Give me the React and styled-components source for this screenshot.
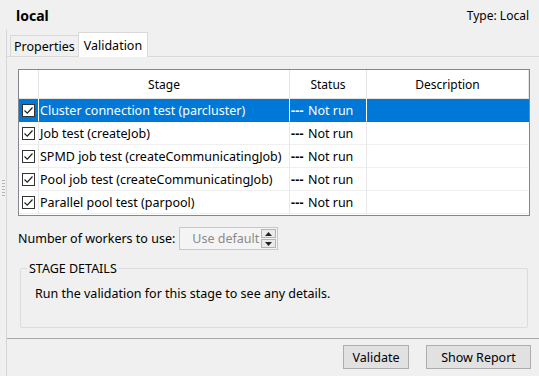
import React from 'react'
import styled, { createGlobalStyle } from 'styled-components'

const GlobalStyle = createGlobalStyle`
  html, body { margin: 0; padding: 0; background: #f0f0f0; }
  body { font-family: "Noto Sans", "Open Sans", sans-serif; font-size: 12px; color: #000; }
`

const stages = [
  'Cluster connection test (parcluster)',
  'Job test (createJob)',
  'SPMD job test (createCommunicatingJob)',
  'Pool job test (createCommunicatingJob)',
  'Parallel pool test (parpool)',
]

const Window = styled.div`
  width: 539px;
  height: 376px;
  display: flex;
  flex-direction: column;
  overflow: hidden;
`

const Header = styled.div`
  height: 30px;
  display: flex;
  align-items: center;
  justify-content: space-between;
  padding: 0 10px 0 16px;
  h1 { margin: 0; font-size: 14px; font-weight: 700; }
  span { font-size: 12px; }
`

const Body = styled.div`
  flex: 1;
  display: flex;
  flex-direction: column;
  margin-left: 6px;
  border-left: 1px solid #d6d6d6;
  position: relative;
`

const Grip = styled.div`
  position: absolute;
  left: -5px;
  top: 150px;
  width: 3px;
  height: 16px;
  background: repeating-linear-gradient(#b4b4b4 0 1px, transparent 1px 3px);
`

const TabStrip = styled.div`
  height: 26px;
  display: flex;
  align-items: flex-end;
  padding-left: 3px;
`

const Tab = styled.div`
  height: ${p => (p.$active ? '25px' : '21px')};
  box-sizing: border-box;
  padding: 0 ${p => (p.$active ? 5 : 3)}px;
  display: flex;
  align-items: center;
  font-size: 12.5px;
  background: ${p => (p.$active ? '#fff' : '#f0f0f0')};
  border: 1px solid #d9d9d9;
  border-bottom: none;
  margin-bottom: ${p => (p.$active ? '-1px' : '0')};
  position: relative;
  z-index: ${p => (p.$active ? 1 : 0)};
  ${p => !p.$active && 'border-right: none;'}
`

const Panel = styled.div`
  height: 283px;
  box-sizing: border-box;
  border-top: 1px solid #d9d9d9;
  border-bottom: 1px solid #a8a8a8;
  padding: 12px 8px 0 11px;
  display: flex;
  flex-direction: column;
`

const Table = styled.div`
  width: 512px;
  height: 147px;
  box-sizing: border-box;
  background: #fff;
  border: 1px solid #828790;
  display: grid;
  grid-template-columns: 20px 251px 77px 1fr;
  grid-template-rows: 29px repeat(5, 23px);
  align-content: start;
`

const HeadCell = styled.div`
  display: flex;
  align-items: center;
  justify-content: center;
  border-right: 1px solid #e5e5e5;
  border-bottom: 1px solid #e5e5e5;
  &:last-child { border-right: none; }
`

const Cell = styled.div`
  display: flex;
  align-items: center;
  padding-left: ${p => p.$pad ?? 1}px;
  white-space: nowrap;
  overflow: hidden;
  background: ${p => (p.$sel ? '#0078d7' : '#fff')};
  color: ${p => (p.$sel ? '#fff' : '#000')};
  border-right: 1px solid ${p => (p.$last ? 'transparent' : p.$sel ? '#fff' : '#e8e8e8')};
  border-bottom: 1px solid ${p => (p.$sel ? '#0078d7' : '#efefef')};
  font-size: 12.5px;
`

const Box = styled.span`
  width: 13px;
  height: 13px;
  box-sizing: border-box;
  border: 1px solid #333;
  background: #fff;
  display: flex;
  align-items: center;
  justify-content: center;
  margin-left: 3px;
`

const Dashes = styled.span`
  font-weight: 700;
  letter-spacing: 0.3px;
  margin-right: 4px;
`

const WorkersRow = styled.div`
  display: flex;
  align-items: center;
  margin-top: 11px;
  height: 23px;
  font-size: 12.5px;
`

const Spinner = styled.div`
  margin-left: 4px;
  width: 99px;
  height: 23px;
  box-sizing: border-box;
  border: 1px solid #c8c8c8;
  background: #f4f4f4;
  display: flex;
  align-items: center;
  justify-content: flex-end;
  color: #8a8a8a;
`

const SpinButtons = styled.div`
  width: 15px;
  height: 19px;
  margin: 0 1px 0 2px;
  display: flex;
  flex-direction: column;
  gap: 1px;
`

const SpinBtn = styled.div`
  flex: 1;
  border: 1px solid #b4b4b4;
  background: #eaeaea;
  display: flex;
  align-items: center;
  justify-content: center;
`

const Group = styled.fieldset`
  margin: 10px 0 0 2px;
  width: 508px;
  height: 68px;
  box-sizing: border-box;
  border: 1px solid #dcdcdc;
  border-radius: 2px;
  padding: 0 0 0 14px;
  legend {
    margin-left: -8px;
    padding: 0 2px;
    font-size: 12.5px;
  }
  p { margin: 8px 0 0; font-size: 12.5px; }
`

const ButtonBar = styled.div`
  flex: 1;
  display: flex;
  justify-content: flex-end;
  align-items: flex-start;
  gap: 17px;
  padding: 6px 8px 0 0;
`

const Button = styled.button`
  height: 24px;
  width: ${p => p.$w}px;
  border: 1px solid #adadad;
  background: #e1e1e1;
  font-family: inherit;
  font-size: 12.5px;
  color: #000;
  padding: 0;
`

const Check = () => (
  <svg width="11" height="11" viewBox="0 0 11 11">
    <path d="M1.5 5.5 L4.3 8.2 L9.5 2.5" fill="none" stroke="#222" strokeWidth="1.2" />
  </svg>
)

const Arrow = ({ up }) => (
  <svg width="7" height="4" viewBox="0 0 7 4">
    <path d={up ? 'M0 4 L3.5 0 L7 4 Z' : 'M0 0 L3.5 4 L7 0 Z'} fill="#222" />
  </svg>
)

export default function App() {
  return (
    <Window>
      <GlobalStyle />
      <Header>
        <h1>local</h1>
        <span>Type: Local</span>
      </Header>
      <Body>
        <Grip />
        <TabStrip>
          <Tab>Properties</Tab>
          <Tab $active>Validation</Tab>
        </TabStrip>
        <Panel>
          <Table>
            <HeadCell />
            <HeadCell>Stage</HeadCell>
            <HeadCell>Status</HeadCell>
            <HeadCell>Description</HeadCell>
            {stages.map((s, i) => {
              const sel = i === 0
              return (
                <React.Fragment key={s}>
                  <Cell $sel={sel} $pad={0}>
                    <Box><Check /></Box>
                  </Cell>
                  <Cell $sel={sel}>{s}</Cell>
                  <Cell $sel={sel}><Dashes>---</Dashes>Not run</Cell>
                  <Cell $sel={sel} $last />
                </React.Fragment>
              )
            })}
          </Table>
          <WorkersRow>
            Number of workers to use:
            <Spinner>
              Use default
              <SpinButtons>
                <SpinBtn><Arrow up /></SpinBtn>
                <SpinBtn><Arrow /></SpinBtn>
              </SpinButtons>
            </Spinner>
          </WorkersRow>
          <Group>
            <legend>STAGE DETAILS</legend>
            <p>Run the validation for this stage to see any details.</p>
          </Group>
        </Panel>
        <ButtonBar>
          <Button $w={66}>Validate</Button>
          <Button $w={105}>Show Report</Button>
        </ButtonBar>
      </Body>
    </Window>
  )
}
